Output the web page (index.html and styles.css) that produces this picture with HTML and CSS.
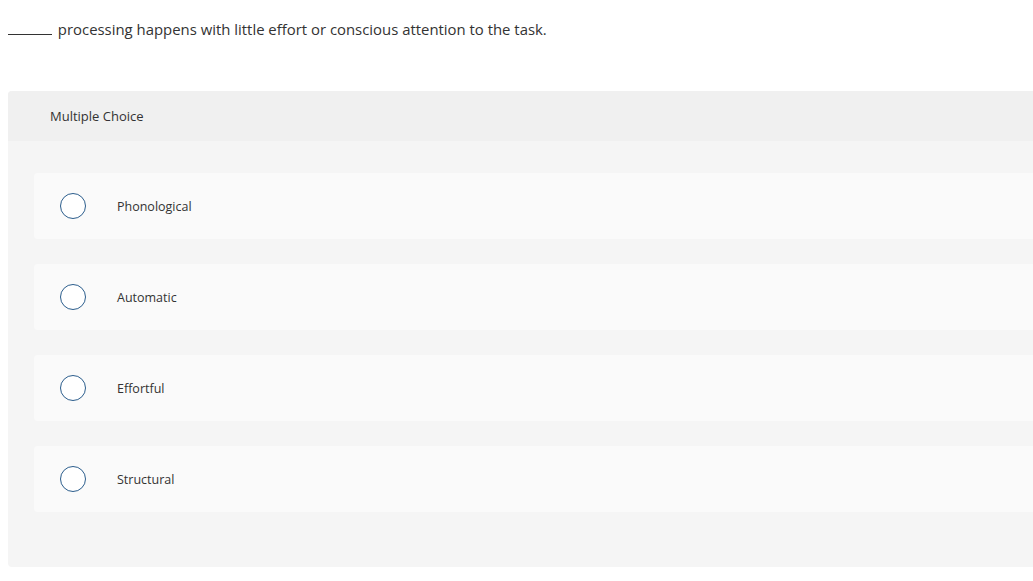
FILE: index.html
```html
<!DOCTYPE html>
<html>
<head>
<meta charset="utf-8">
<link rel="stylesheet" href="styles.css">
</head>
<body>
<div class="page">
  <p class="question"><span class="blank"></span> processing happens with little effort or conscious attention to the task.</p>
  <div class="panel">
    <div class="panel-head">Multiple Choice</div>
    <div class="panel-body">
      <div class="choice"><span class="radio"></span><span class="label">Phonological</span></div>
      <div class="choice"><span class="radio"></span><span class="label">Automatic</span></div>
      <div class="choice"><span class="radio"></span><span class="label">Effortful</span></div>
      <div class="choice"><span class="radio"></span><span class="label">Structural</span></div>
    </div>
  </div>
</div>
</body>
</html>
```
FILE: styles.css
```css
html, body { margin: 0; padding: 0; overflow: hidden; background: #fff; }
body { font-family: "Open Sans", "Liberation Sans", sans-serif; color: #333; }
.page { padding: 0 0 0 8px; width: 1060px; }
.question { margin: 0; padding-top: 19px; height: 91px; box-sizing: border-box; font-size: 14.9px; line-height: 20px; color: #333; }
.blank { display: inline-block; width: 44px; border-bottom: 1px solid #333; height: 14px; vertical-align: baseline; margin-right: 2px; }
.panel { background: #f5f5f5; border-radius: 4px; }
.panel-head { background: #f0f0f0; height: 50px; display: flex; align-items: center; padding-left: 42px; font-size: 13px; color: #333; border-radius: 4px 4px 0 0; }
.panel-body { padding: 32px 0 55px 26px; display: flex; flex-direction: column; gap: 25px; }
.choice { background: #fafafa; height: 66px; border-radius: 4px 0 0 4px; display: flex; align-items: center; padding-left: 25.5px; }
.radio { width: 24px; height: 24px; border: 1.5px solid #2b5d8c; border-radius: 50%; background: #fff; flex: none; }
.label { margin-left: 31.5px; font-size: 12.5px; color: #333; }
```
